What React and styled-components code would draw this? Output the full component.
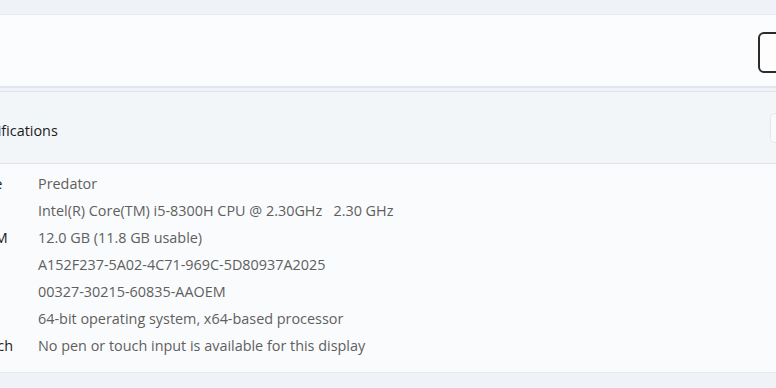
import styled, { createGlobalStyle } from "styled-components";

const specs = [
  { label: "Device name", value: "Predator" },
  { label: "Processor", value: "Intel(R) Core(TM) i5-8300H CPU @ 2.30GHz   2.30 GHz" },
  { label: "Installed RAM", value: "12.0 GB (11.8 GB usable)" },
  { label: "Device ID", value: "A152F237-5A02-4C71-969C-5D80937A2025" },
  { label: "Product ID", value: "00327-30215-60835-AAOEM" },
  { label: "System type", value: "64-bit operating system, x64-based processor" },
  { label: "Pen and touch", value: "No pen or touch input is available for this display" },
];

const App = () => {
  return (
    <>
      <GlobalStyle />
      <Page>
        <PcCard>
          <PcInfo>
            <span className="name">Predator</span>
            <span className="model">Predator PH315-51</span>
          </PcInfo>
          <RenameButton>Rename this PC</RenameButton>
        </PcCard>

        <SpecCard>
          <SpecHeader>
            <span className="title">Device specifications</span>
            <CopyButton>Copy</CopyButton>
          </SpecHeader>
          <SpecBody>
            {specs.map((s) => (
              <SpecRow key={s.label}>
                <span className="label">{s.label}</span>
                <span className="value">{s.value}</span>
              </SpecRow>
            ))}
          </SpecBody>
        </SpecCard>
      </Page>
    </>
  );
};

const GlobalStyle = createGlobalStyle`
  html, body {
    margin: 0;
    padding: 0;
    background: #eff3f8;
    overflow: hidden;
  }
  body {
    font-family: "Open Sans", "Noto Sans", "Liberation Sans", sans-serif;
    -webkit-font-smoothing: antialiased;
  }
`;

const Page = styled.div`
  width: 1040px;
  margin-left: -128px;
  padding-top: 14px;
  display: flex;
  flex-direction: column;
  gap: 3px;
`;

const PcCard = styled.div`
  height: 74px;
  box-sizing: border-box;
  display: flex;
  align-items: center;
  justify-content: space-between;
  padding: 0 16px 0 40px;
  background: #fbfcfd;
  border-top: 1px solid #e6ebf2;
  border-bottom: 2px solid #dfe6ef;
`;

const PcInfo = styled.div`
  display: flex;
  flex-direction: column;
  visibility: hidden;
  .name { font-size: 20px; }
  .model { font-size: 12px; }
`;

const RenameButton = styled.button`
  width: 138px;
  height: 41px;
  margin-top: 3px;
  padding: 0 0 0 26px;
  text-align: left;
  border: 2px solid #2b2b2b;
  border-radius: 6px;
  background: #fdfdfd;
  font-family: inherit;
  font-size: 14px;
  color: #1b1b1b;
`;

const SpecCard = styled.div`
  display: flex;
  flex-direction: column;
  border-top: 1px solid #dde4ec;
`;

const SpecHeader = styled.div`
  height: 72px;
  box-sizing: border-box;
  display: flex;
  align-items: center;
  justify-content: space-between;
  padding: 5px 72px 0 47px;
  background: #f3f6f9;
  border-bottom: 1px solid #dfe3e8;

  .title {
    font-size: 14.4px;
    color: #1b1b1b;
  }
`;

const CopyButton = styled.button`
  width: 70px;
  height: 30px;
  margin-top: -4px;
  padding: 0 0 0 22px;
  text-align: left;
  border: 1px solid #e4e8ee;
  border-radius: 5px;
  background: #f8fafc;
  font-family: inherit;
  font-size: 13px;
  color: #1b1b1b;
`;

const SpecBody = styled.div`
  display: flex;
  flex-direction: column;
  padding: 6px 0 13px 44px;
  background: #fafbfc;
  border-bottom: 1px solid #e8ebef;
`;

const SpecRow = styled.div`
  display: flex;
  align-items: center;
  height: 27px;
  font-size: 14.4px;

  .label {
    width: 122px;
    flex-shrink: 0;
    color: #1b1b1b;
  }

  .value {
    color: #5f5f5f;
    white-space: pre;
  }
`;

export default App;
